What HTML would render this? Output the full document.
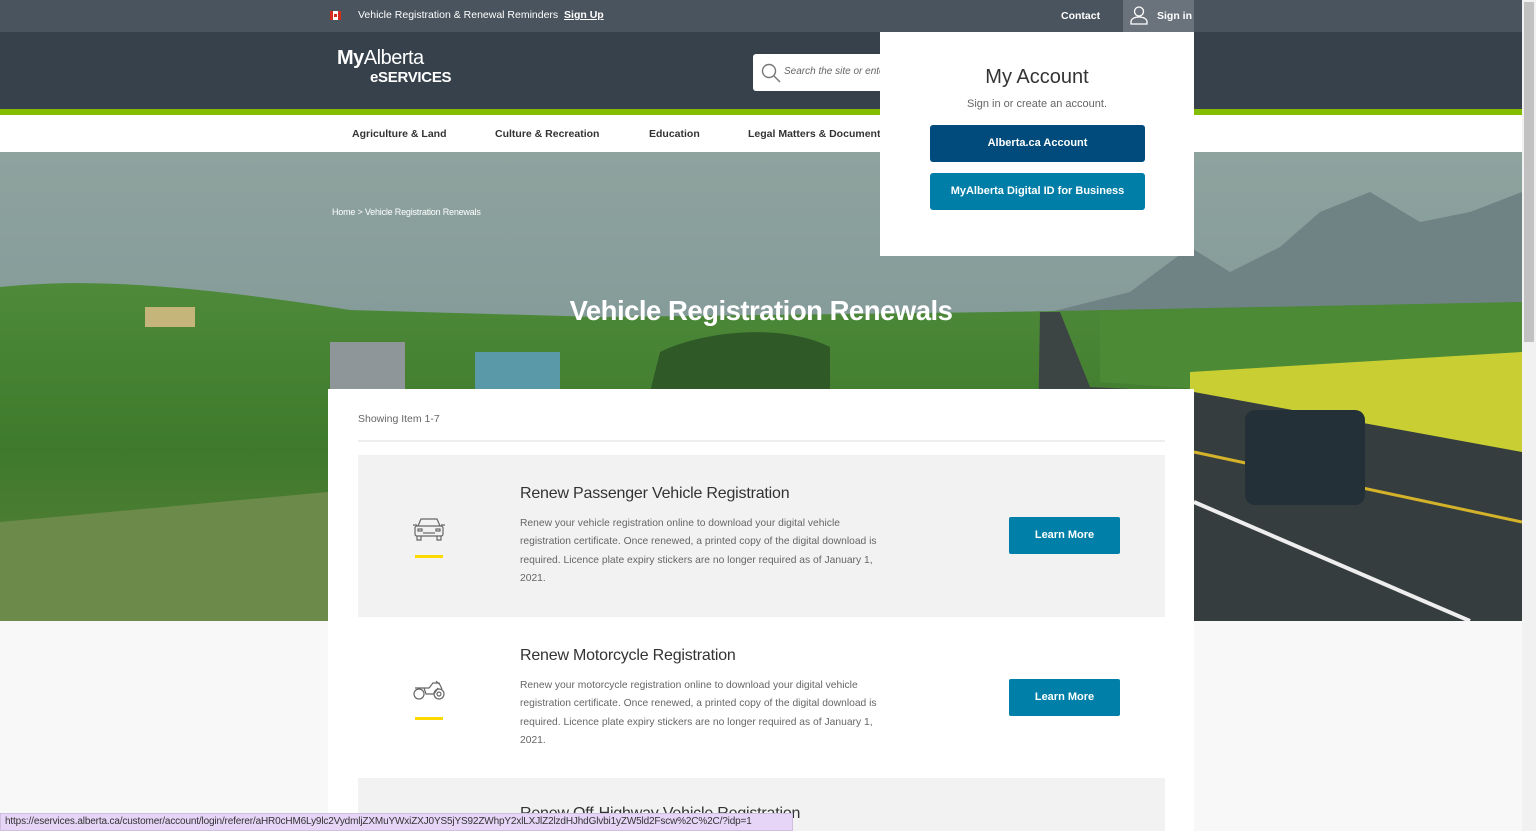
<!DOCTYPE html>
<html><head><meta charset="utf-8">
<style>
*{box-sizing:border-box;margin:0;padding:0}
html,body{width:1536px;height:831px;overflow:hidden}
body{background:#f8f8f8;font-family:"Liberation Sans",sans-serif;position:relative}
.top{position:absolute;left:0;top:0;width:1522px;height:32px;background:#4a545e;color:#fff;font-size:10.5px}
.hdr{position:absolute;left:0;top:32px;width:1522px;height:77px;background:#36414b}
.green{position:absolute;left:0;top:109px;width:1522px;height:6px;background:#84bd00}
.nav{position:absolute;left:0;top:115px;width:1522px;height:37px;background:#fff;font-size:10.5px;color:#333;font-weight:bold}
.nav span{position:absolute;top:13px}
.hero{position:absolute;left:0;top:152px;width:1522px;height:469px;overflow:hidden}
.scroll{position:absolute;left:1522px;top:0;width:14px;height:831px;background:#f1f1f1}
.scroll div{position:absolute;left:2px;top:2px;width:10px;height:340px;background:#c1c1c1}
.card{position:absolute;left:328px;top:389px;width:866px;height:442px;background:#fff}
.item{position:absolute;left:358px;width:807px;height:162px}
.item h3{position:absolute;left:162px;top:30px;font-size:16px;color:#333;font-weight:normal;letter-spacing:-0.2px}
.item p{position:absolute;left:162px;top:60px;width:370px;font-size:10.3px;line-height:18.3px;color:#666}
.btn{position:absolute;left:651px;top:62px;width:111px;height:37px;background:#0080a8;color:#fff;font-size:11px;font-weight:bold;text-align:center;line-height:37px;border-radius:2px}
.bar{position:absolute;left:57px;top:100px;width:28px;height:3px;background:#fed900}
.drop{position:absolute;left:880px;top:32px;width:314px;height:224px;background:#fff}
.status{position:absolute;left:0;top:813px;height:18px;width:793px;overflow:hidden;white-space:nowrap;background:#e6d5f7;font-size:10px;letter-spacing:-0.15px;color:#333;line-height:16px;padding-left:4px;border:1px solid #d0c0e0}
</style></head><body>
<div class="top">
 <div style="position:absolute;left:330px;top:11px;width:11px;height:9px;background:#fff;border-left:3px solid #d52b1e;border-right:3px solid #d52b1e"><div style="width:3px;height:3px;background:#d52b1e;margin:3px auto"></div></div>
 <span style="position:absolute;left:358px;top:9px">Vehicle Registration &amp; Renewal Reminders&nbsp; <b style="text-decoration:underline">Sign Up</b></span>
 <span style="position:absolute;left:1061px;top:10px;font-weight:bold">Contact</span>
 <div style="position:absolute;left:1123px;top:0;width:71px;height:32px;background:#6a737c">
  <svg style="position:absolute;left:6px;top:5px" width="20" height="20" viewBox="0 0 20 20" fill="none" stroke="#fff" stroke-width="1.3"><circle cx="10" cy="6.5" r="4.5"/><path d="M2 19v-2c0-3 3-5 8-5s8 2 8 5v2z"/></svg>
  <span style="position:absolute;left:34px;top:10px;font-weight:bold">Sign in</span>
 </div>
</div>
<div class="hdr">
 <div style="position:absolute;left:337px;top:16px;color:#fff;font-size:20px;line-height:20px;letter-spacing:-0.5px"><b>My</b>Alberta</div>
 <div style="position:absolute;left:370px;top:37px;color:#fff;font-size:15px;font-weight:bold;letter-spacing:-0.3px">eSERVICES</div>
 <div style="position:absolute;left:753px;top:22px;width:140px;height:37px;background:#fff;border-radius:3px">
  <svg style="position:absolute;left:8px;top:9px" width="20" height="20" viewBox="0 0 20 20" fill="none" stroke="#777" stroke-width="1.4"><circle cx="8" cy="8" r="6.5"/><path d="M13 13l6 6"/></svg>
  <span style="position:absolute;left:31px;top:12px;font-size:10px;font-style:italic;color:#666">Search the site or enter</span>
 </div>
</div>
<div class="green"></div>
<div class="nav"><span style="left:352px">Agriculture &amp; Land</span><span style="left:495px">Culture &amp; Recreation</span><span style="left:649px">Education</span><span style="left:748px">Legal Matters &amp; Documents</span></div>
<div class="hero">
<svg width="1522" height="469" viewBox="0 0 1522 469" preserveAspectRatio="none">
<defs><linearGradient id="sky" x1="0" y1="0" x2="0" y2="1"><stop offset="0" stop-color="#8ea39e"/><stop offset="0.6" stop-color="#7f9797"/><stop offset="1" stop-color="#8a9ea0"/></linearGradient>
<linearGradient id="fld" x1="0" y1="0" x2="0" y2="1"><stop offset="0" stop-color="#4e8a3a"/><stop offset="0.5" stop-color="#3f7a2c"/><stop offset="1" stop-color="#5a7f3a"/></linearGradient></defs>
<rect width="1522" height="469" fill="url(#sky)"/>
<path d="M1050 160 L1130 140 L1190 95 L1230 120 L1280 95 L1320 60 L1370 40 L1420 70 L1470 60 L1522 40 L1522 160 Z" fill="#6f8385"/>
<path d="M0 135 C100 125 200 135 350 158 L600 165 L1000 160 L1522 150 L1522 469 L0 469 Z" fill="url(#fld)"/>
<path d="M1100 160 L1522 150 L1522 260 L1100 230 Z" fill="#4c8a36"/>
<path d="M1190 220 L1522 200 L1522 300 L1190 330 Z" fill="#c9cf33"/>
<path d="M1040 160 L1060 160 L1090 235 L1194 240 L1194 469 L1035 469 Z" fill="#3c4444"/>
<path d="M1194 240 L1522 300 L1522 469 L1194 469 Z" fill="#353d3f"/>
<path d="M1194 350 L1470 469" stroke="#eee" stroke-width="4"/>
<path d="M1194 300 L1522 370" stroke="#d4b22a" stroke-width="3"/>
<rect x="1245" y="258" width="120" height="95" rx="10" fill="#243038"/>
<rect x="330" y="190" width="75" height="50" fill="#8f969a"/>
<rect x="475" y="200" width="85" height="40" fill="#5a9aa8"/>
<rect x="145" y="155" width="50" height="20" fill="#c6b57a"/>
<path d="M660 200 C700 180 780 170 830 195 L830 240 L650 240 Z" fill="#2f5a28"/>
<path d="M0 370 L328 340 L328 469 L0 469 Z" fill="#6c8a4a"/>
</svg>
<div style="position:absolute;left:332px;top:55px;font-size:9px;color:#fff;letter-spacing:-0.2px">Home &gt; Vehicle Registration Renewals</div>
<div style="position:absolute;left:0;width:1522px;text-align:center;top:143px;font-size:27.5px;font-weight:bold;color:#fff;letter-spacing:-0.5px">Vehicle Registration Renewals</div>
</div>
<div class="card">
 <div style="position:absolute;left:30px;top:24px;font-size:10.5px;color:#666">Showing Item 1-7</div>
 <div style="position:absolute;left:30px;top:51px;width:807px;height:2px;background:#eee"></div>
</div>
<div class="item" style="top:455px;background:#f2f2f2">
 <svg style="position:absolute;left:54px;top:61px" width="34" height="26" viewBox="0 0 34 26" fill="none" stroke="#666" stroke-width="1.2"><path d="M6 10l3-7h16l3 7"/><rect x="3" y="10" width="28" height="10" rx="2"/><path d="M5 20v4h4v-4M25 20v4h4v-4M1 9h4M29 9h4"/><rect x="6" y="13" width="4" height="2"/><rect x="24" y="13" width="4" height="2"/><path d="M11 17h12"/></svg>
 <div class="bar"></div>
 <h3>Renew Passenger Vehicle Registration</h3>
 <p>Renew your vehicle registration online to download your digital vehicle registration certificate. Once renewed, a printed copy of the digital download is required. Licence plate expiry stickers are no longer required as of January 1, 2021.</p>
 <div class="btn">Learn More</div>
</div>
<div class="item" style="top:617px;background:#fff">
 <svg style="position:absolute;left:54px;top:62px" width="34" height="22" viewBox="0 0 34 22" fill="none" stroke="#666" stroke-width="1.2"><circle cx="7" cy="15" r="5"/><circle cx="27" cy="15" r="5"/><circle cx="27" cy="15" r="2"/><path d="M3 9h14l4-5h6l3 6M12 9l2 6h8l4-6M24 2l3 3"/></svg>
 <div class="bar"></div>
 <h3>Renew Motorcycle Registration</h3>
 <p>Renew your motorcycle registration online to download your digital vehicle registration certificate. Once renewed, a printed copy of the digital download is required. Licence plate expiry stickers are no longer required as of January 1, 2021.</p>
 <div class="btn">Learn More</div>
</div>
<div class="item" style="top:778px;height:53px;background:#f2f2f2">
 <h3 style="top:27px">Renew Off-Highway Vehicle Registration</h3>
</div>
<div class="drop">
 <div style="position:absolute;left:0;width:314px;text-align:center;top:34px;font-size:20px;color:#333">My Account</div>
 <div style="position:absolute;left:0;width:314px;text-align:center;top:66px;font-size:11px;color:#666">Sign in or create an account.</div>
 <div style="position:absolute;left:50px;top:93px;width:215px;height:37px;background:#004b7c;border-radius:3px;color:#fff;font-size:11px;font-weight:bold;text-align:center;line-height:37px">Alberta.ca Account</div>
 <div style="position:absolute;left:50px;top:141px;width:215px;height:37px;background:#007ea8;border-radius:3px;color:#fff;font-size:11px;font-weight:bold;text-align:center;line-height:37px">MyAlberta Digital ID for Business</div>
</div>
<div class="status">https://eservices.alberta.ca/customer/account/login/referer/aHR0cHM6Ly9lc2VydmljZXMuYWxiZXJ0YS5jYS92ZWhpY2xlLXJlZ2lzdHJhdGlvbi1yZW5ld2Fscw%2C%2C/?idp=1</div>
<div class="scroll"><div></div></div>
</body></html>
